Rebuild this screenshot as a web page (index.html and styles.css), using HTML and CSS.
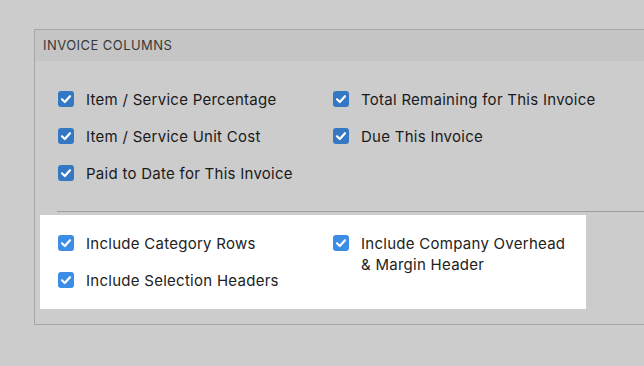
FILE: index.html
```html
<!DOCTYPE html>
<html>
<head>
<meta charset="utf-8">
<link rel="stylesheet" href="styles.css">
</head>
<body>
<div class="panel">
  <div class="panel-head">INVOICE COLUMNS</div>
  <div class="panel-body">
    <div class="grid">
      <div class="item"><span class="cb"><svg viewBox="0 0 16 16"><path d="M4 8.3 L6.8 11 L12 5.2"/></svg></span><span class="label">Item / Service Percentage</span></div>
      <div class="item"><span class="cb"><svg viewBox="0 0 16 16"><path d="M4 8.3 L6.8 11 L12 5.2"/></svg></span><span class="label">Total Remaining for This Invoice</span></div>
      <div class="item"><span class="cb"><svg viewBox="0 0 16 16"><path d="M4 8.3 L6.8 11 L12 5.2"/></svg></span><span class="label">Item / Service Unit Cost</span></div>
      <div class="item"><span class="cb"><svg viewBox="0 0 16 16"><path d="M4 8.3 L6.8 11 L12 5.2"/></svg></span><span class="label">Due This Invoice</span></div>
      <div class="item"><span class="cb"><svg viewBox="0 0 16 16"><path d="M4 8.3 L6.8 11 L12 5.2"/></svg></span><span class="label">Paid to Date for This Invoice</span></div>
    </div>
    <div class="divider"></div>
    <div class="highlight">
      <div class="grid">
        <div class="item"><span class="cb"><svg viewBox="0 0 16 16"><path d="M4 8.3 L6.8 11 L12 5.2"/></svg></span><span class="label">Include Category Rows</span></div>
        <div class="item span2"><span class="cb"><svg viewBox="0 0 16 16"><path d="M4 8.3 L6.8 11 L12 5.2"/></svg></span><span class="label">Include Company Overhead<br>&amp; Margin Header</span></div>
        <div class="item"><span class="cb"><svg viewBox="0 0 16 16"><path d="M4 8.3 L6.8 11 L12 5.2"/></svg></span><span class="label">Include Selection Headers</span></div>
      </div>
    </div>
  </div>
</div>
</body>
</html>
```

FILE: styles.css
```css
html, body {
  margin: 0;
  padding: 0;
  background: #cccccc;
  width: 644px;
  height: 366px;
  overflow: hidden;
}
body {
  font-family: Inter, "Open Sans", "Liberation Sans", sans-serif;
  color: #1a1a1a;
  padding-top: 29px;
  padding-left: 34px;
  box-sizing: border-box;
}
.panel {
  width: 640px;
  border: 1px solid #a6a6a6;
  box-sizing: border-box;
}
.panel-head {
  height: 31px;
  background: #c5c5c5;
  font-size: 13px;
  line-height: 31px;
  padding-left: 8px;
  color: #383838;
  letter-spacing: 0.45px;
}
.panel-body {
  padding-top: 20px;
  padding-bottom: 15px;
}
.grid {
  display: grid;
  grid-template-columns: 275px 1fr;
  grid-auto-rows: 37px;
  padding-left: 23px;
}
.item {
  display: flex;
  align-items: flex-start;
  padding-top: 8px;
  font-size: 15px;
  line-height: 21px;
  letter-spacing: 0.27px;
}
.span2 {
  grid-row: span 2;
}
.cb {
  flex: none;
  width: 16px;
  height: 16px;
  margin-top: 2px;
  margin-right: 12px;
  border-radius: 3px;
  background: #3478c4;
  display: flex;
}
.cb svg {
  width: 16px;
  height: 16px;
}
.cb path {
  fill: none;
  stroke: #ffffff;
  stroke-width: 2.2;
  stroke-linecap: round;
  stroke-linejoin: round;
}
.label {
  white-space: nowrap;
}
.divider {
  margin-top: 19px;
  margin-left: 22px;
  height: 1px;
  background: #9e9e9e;
}
.highlight {
  margin-top: 3px;
  margin-left: 5px;
  width: 546px;
  height: 94px;
  box-sizing: border-box;
  padding-top: 10px;
  background: #ffffff;
}
.highlight .grid {
  padding-left: 18px;
}
.highlight .cb {
  background: #3b8de6;
}
.highlight .item {
  color: #222222;
}
```
